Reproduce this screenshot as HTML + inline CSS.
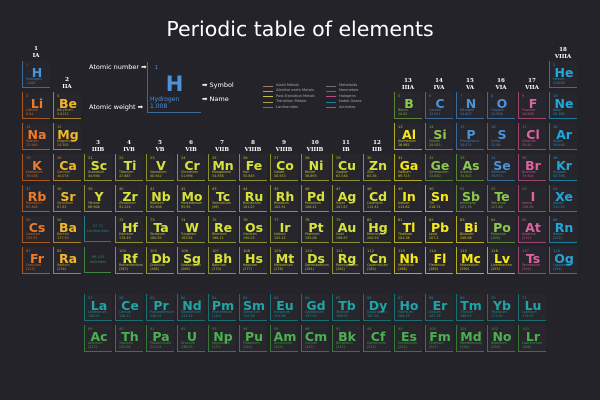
<!DOCTYPE html>
<html><head><meta charset="utf-8"><style>
*{margin:0;padding:0}
body{width:600px;height:400px;background:#232329;position:relative;overflow:hidden;font-family:"DejaVu Sans","Liberation Sans",sans-serif;color:#fff}
.t{position:absolute;left:0;width:600px;top:17px;text-align:center;font-size:20.5px;color:#fff}
.g{position:absolute;width:28px;text-align:center;font-family:"DejaVu Serif","Liberation Serif",serif;font-size:5.5px;line-height:6.5px;color:#fff;font-weight:bold}
.c{position:absolute;width:27px;height:26px;border-left:1px solid;border-bottom:1px solid;background:#26262c}
.c i{position:absolute;left:3px;top:2px;font-size:3.6px;font-style:normal;opacity:.8}
.c b{position:absolute;left:0;width:28px;top:5px;text-align:center;font-size:12.5px;line-height:14px}
.c s{position:absolute;left:3px;bottom:1px;font-size:3.3px;line-height:3.8px;text-decoration:none;opacity:.8;white-space:pre}
.a{color:#ef7a2a;border-color:#a8581e}.e{color:#f0b62c;border-color:#a8822a}.tr{color:#d8e23a;border-color:#8c9030}
.p{color:#f7e81a;border-color:#b5aa20}.m{color:#8cc84c;border-color:#5a8438}.n{color:#4e92d6;border-color:#3a6a98}
.h{color:#e0629e;border-color:#9a4470}.ng{color:#1fa8dc;border-color:#1a7aa0}.l{color:#1fa5a5;border-color:#1a7070}.x{color:#4cb050;border-color:#357838}
.ph{position:absolute;width:27px;height:26px;border-left:1px solid;border-bottom:1px solid;font-size:3.6px;text-align:center;line-height:5px;padding-top:8px;box-sizing:border-box;opacity:.7}
.lab{position:absolute;font-size:6.5px;color:#fff}
.lg{position:absolute;font-size:3.6px;color:#aaa;line-height:5.4px}
.lg div{position:relative;padding-left:13px}
.lg div span{position:absolute;left:0;top:2.5px;width:10px;height:1px}
</style></head><body>
<div class="t">Periodic table of elements</div>

<div class="g" style="left:22px;top:46px">1<br>IA</div>
<div class="g" style="left:53px;top:77px">2<br>IIA</div>
<div class="g" style="left:84px;top:140px">3<br>IIIB</div>
<div class="g" style="left:115px;top:140px">4<br>IVB</div>
<div class="g" style="left:146px;top:140px">5<br>VB</div>
<div class="g" style="left:177px;top:140px">6<br>VIB</div>
<div class="g" style="left:208px;top:140px">7<br>VIIB</div>
<div class="g" style="left:239px;top:140px">8<br>VIIIB</div>
<div class="g" style="left:270px;top:140px">9<br>VIIIB</div>
<div class="g" style="left:301px;top:140px">10<br>VIIIB</div>
<div class="g" style="left:332px;top:140px">11<br>IB</div>
<div class="g" style="left:363px;top:140px">12<br>IIB</div>
<div class="g" style="left:394px;top:78px">13<br>IIIA</div>
<div class="g" style="left:425px;top:78px">14<br>IVA</div>
<div class="g" style="left:456px;top:78px">15<br>VA</div>
<div class="g" style="left:487px;top:78px">16<br>VIA</div>
<div class="g" style="left:518px;top:78px">17<br>VIIA</div>
<div class="g" style="left:549px;top:47px">18<br>VIIIA</div>

<div style="position:absolute;left:147px;top:62px;width:53px;height:50px;border-left:1px solid #3a6a98;border-bottom:1px solid #3a6a98;color:#4e92d6">
<div style="position:absolute;left:7px;top:3px;font-size:5px">1</div>
<div style="position:absolute;left:0;width:53px;text-align:center;top:10px;font-size:21px;font-weight:bold">H</div>
<div style="position:absolute;left:2px;top:34px;font-size:6px;line-height:7px">Hydrogen<br>1.008</div>
</div>
<div class="lab" style="left:89px;top:63px">Atomic number ➡</div>
<div class="lab" style="left:89px;top:103px">Atomic weight ➡</div>
<div class="lab" style="left:202px;top:81px">➡ Symbol</div>
<div class="lab" style="left:202px;top:95px">➡ Name</div>
<div class="lg" style="left:263px;top:83px">
<div><span style="background:#a87a50"></span>Alkali Metals</div>
<div><span style="background:#c0a040"></span>Alkaline earth Metals</div>
<div><span style="background:#c8c040"></span>Post-Transition Metals</div>
<div><span style="background:#a0a050"></span>Transition Metals</div>
<div><span style="background:#2a9090"></span>Lanthanides</div>
</div>
<div class="lg" style="left:326px;top:83px">
<div><span style="background:#707070"></span>Metalloids</div>
<div><span style="background:#4a70a0"></span>Nonmetals</div>
<div><span style="background:#b05088"></span>Halogens</div>
<div><span style="background:#2080a8"></span>Noble Gases</div>
<div><span style="background:#4a8a4a"></span>Actinides</div>
</div>

<div class="c n" style="left:22px;top:61px"><i>1</i><b>H</b><s>Hydrogen
1.008</s></div>
<div class="c ng" style="left:549px;top:61px"><i>2</i><b>He</b><s>Helium
4.0026</s></div>
<div class="c a" style="left:22px;top:92px"><i>3</i><b>Li</b><s>Lithium
6.94</s></div>
<div class="c e" style="left:53px;top:92px"><i>4</i><b>Be</b><s>Beryllium
9.0122</s></div>
<div class="c m" style="left:394px;top:92px"><i>5</i><b>B</b><s>Boron
10.81</s></div>
<div class="c n" style="left:425px;top:92px"><i>6</i><b>C</b><s>Carbon
12.011</s></div>
<div class="c n" style="left:456px;top:92px"><i>7</i><b>N</b><s>Nitrogen
14.007</s></div>
<div class="c n" style="left:487px;top:92px"><i>8</i><b>O</b><s>Oxygen
15.999</s></div>
<div class="c h" style="left:518px;top:92px"><i>9</i><b>F</b><s>Fluorine
18.998</s></div>
<div class="c ng" style="left:549px;top:92px"><i>10</i><b>Ne</b><s>Neon
20.180</s></div>
<div class="c a" style="left:22px;top:123px"><i>11</i><b>Na</b><s>Sodium
22.990</s></div>
<div class="c e" style="left:53px;top:123px"><i>12</i><b>Mg</b><s>Magnesium
24.305</s></div>
<div class="c p" style="left:394px;top:123px"><i>13</i><b>Al</b><s>Aluminium
26.982</s></div>
<div class="c m" style="left:425px;top:123px"><i>14</i><b>Si</b><s>Silicon
28.085</s></div>
<div class="c n" style="left:456px;top:123px"><i>15</i><b>P</b><s>Phosphorus
30.974</s></div>
<div class="c n" style="left:487px;top:123px"><i>16</i><b>S</b><s>Sulfur
32.06</s></div>
<div class="c h" style="left:518px;top:123px"><i>17</i><b>Cl</b><s>Chlorine
35.45</s></div>
<div class="c ng" style="left:549px;top:123px"><i>18</i><b>Ar</b><s>Argon
39.948</s></div>
<div class="c a" style="left:22px;top:154px"><i>19</i><b>K</b><s>Potassium
39.098</s></div>
<div class="c e" style="left:53px;top:154px"><i>20</i><b>Ca</b><s>Calcium
40.078</s></div>
<div class="c tr" style="left:84px;top:154px"><i>21</i><b>Sc</b><s>Scandium
44.956</s></div>
<div class="c tr" style="left:115px;top:154px"><i>22</i><b>Ti</b><s>Titanium
47.867</s></div>
<div class="c tr" style="left:146px;top:154px"><i>23</i><b>V</b><s>Vanadium
50.942</s></div>
<div class="c tr" style="left:177px;top:154px"><i>24</i><b>Cr</b><s>Chromium
51.996</s></div>
<div class="c tr" style="left:208px;top:154px"><i>25</i><b>Mn</b><s>Manganese
54.938</s></div>
<div class="c tr" style="left:239px;top:154px"><i>26</i><b>Fe</b><s>Iron
55.845</s></div>
<div class="c tr" style="left:270px;top:154px"><i>27</i><b>Co</b><s>Cobalt
58.933</s></div>
<div class="c tr" style="left:301px;top:154px"><i>28</i><b>Ni</b><s>Nickel
58.693</s></div>
<div class="c tr" style="left:332px;top:154px"><i>29</i><b>Cu</b><s>Copper
63.546</s></div>
<div class="c tr" style="left:363px;top:154px"><i>30</i><b>Zn</b><s>Zinc
65.38</s></div>
<div class="c p" style="left:394px;top:154px"><i>31</i><b>Ga</b><s>Gallium
69.723</s></div>
<div class="c m" style="left:425px;top:154px"><i>32</i><b>Ge</b><s>Germanium
72.630</s></div>
<div class="c m" style="left:456px;top:154px"><i>33</i><b>As</b><s>Arsenic
74.922</s></div>
<div class="c n" style="left:487px;top:154px"><i>34</i><b>Se</b><s>Selenium
78.971</s></div>
<div class="c h" style="left:518px;top:154px"><i>35</i><b>Br</b><s>Bromine
79.904</s></div>
<div class="c ng" style="left:549px;top:154px"><i>36</i><b>Kr</b><s>Krypton
83.798</s></div>
<div class="c a" style="left:22px;top:185px"><i>37</i><b>Rb</b><s>Rubidium
85.468</s></div>
<div class="c e" style="left:53px;top:185px"><i>38</i><b>Sr</b><s>Strontium
87.62</s></div>
<div class="c tr" style="left:84px;top:185px"><i>39</i><b>Y</b><s>Yttrium
88.906</s></div>
<div class="c tr" style="left:115px;top:185px"><i>40</i><b>Zr</b><s>Zirconium
91.224</s></div>
<div class="c tr" style="left:146px;top:185px"><i>41</i><b>Nb</b><s>Niobium
92.906</s></div>
<div class="c tr" style="left:177px;top:185px"><i>42</i><b>Mo</b><s>Molybdenum
95.95</s></div>
<div class="c tr" style="left:208px;top:185px"><i>43</i><b>Tc</b><s>Technetium
(98)</s></div>
<div class="c tr" style="left:239px;top:185px"><i>44</i><b>Ru</b><s>Ruthenium
101.07</s></div>
<div class="c tr" style="left:270px;top:185px"><i>45</i><b>Rh</b><s>Rhodium
102.91</s></div>
<div class="c tr" style="left:301px;top:185px"><i>46</i><b>Pd</b><s>Palladium
106.42</s></div>
<div class="c tr" style="left:332px;top:185px"><i>47</i><b>Ag</b><s>Silver
107.87</s></div>
<div class="c tr" style="left:363px;top:185px"><i>48</i><b>Cd</b><s>Cadmium
112.41</s></div>
<div class="c p" style="left:394px;top:185px"><i>49</i><b>In</b><s>Indium
114.82</s></div>
<div class="c p" style="left:425px;top:185px"><i>50</i><b>Sn</b><s>Tin
118.71</s></div>
<div class="c m" style="left:456px;top:185px"><i>51</i><b>Sb</b><s>Antimony
121.76</s></div>
<div class="c m" style="left:487px;top:185px"><i>52</i><b>Te</b><s>Tellurium
127.60</s></div>
<div class="c h" style="left:518px;top:185px"><i>53</i><b>I</b><s>Iodine
126.90</s></div>
<div class="c ng" style="left:549px;top:185px"><i>54</i><b>Xe</b><s>Xenon
131.29</s></div>
<div class="c a" style="left:22px;top:216px"><i>55</i><b>Cs</b><s>Caesium
132.91</s></div>
<div class="c e" style="left:53px;top:216px"><i>56</i><b>Ba</b><s>Barium
137.33</s></div>
<div class="ph l" style="left:84px;top:216px">57-71<br>Lanthanides</div>
<div class="c tr" style="left:115px;top:216px"><i>72</i><b>Hf</b><s>Hafnium
178.49</s></div>
<div class="c tr" style="left:146px;top:216px"><i>73</i><b>Ta</b><s>Tantalum
180.95</s></div>
<div class="c tr" style="left:177px;top:216px"><i>74</i><b>W</b><s>Tungsten
183.84</s></div>
<div class="c tr" style="left:208px;top:216px"><i>75</i><b>Re</b><s>Rhenium
186.21</s></div>
<div class="c tr" style="left:239px;top:216px"><i>76</i><b>Os</b><s>Osmium
190.23</s></div>
<div class="c tr" style="left:270px;top:216px"><i>77</i><b>Ir</b><s>Iridium
192.22</s></div>
<div class="c tr" style="left:301px;top:216px"><i>78</i><b>Pt</b><s>Platinum
195.08</s></div>
<div class="c tr" style="left:332px;top:216px"><i>79</i><b>Au</b><s>Gold
196.97</s></div>
<div class="c tr" style="left:363px;top:216px"><i>80</i><b>Hg</b><s>Mercury
200.59</s></div>
<div class="c p" style="left:394px;top:216px"><i>81</i><b>Tl</b><s>Thallium
204.38</s></div>
<div class="c p" style="left:425px;top:216px"><i>82</i><b>Pb</b><s>Lead
207.2</s></div>
<div class="c p" style="left:456px;top:216px"><i>83</i><b>Bi</b><s>Bismuth
208.98</s></div>
<div class="c m" style="left:487px;top:216px"><i>84</i><b>Po</b><s>Polonium
(209)</s></div>
<div class="c h" style="left:518px;top:216px"><i>85</i><b>At</b><s>Astatine
(210)</s></div>
<div class="c ng" style="left:549px;top:216px"><i>86</i><b>Rn</b><s>Radon
(222)</s></div>
<div class="c a" style="left:22px;top:247px"><i>87</i><b>Fr</b><s>Francium
(223)</s></div>
<div class="c e" style="left:53px;top:247px"><i>88</i><b>Ra</b><s>Radium
(226)</s></div>
<div class="ph x" style="left:84px;top:247px">89-103<br>Actinides</div>
<div class="c tr" style="left:115px;top:247px"><i>104</i><b>Rf</b><s>Rutherfordium
(267)</s></div>
<div class="c tr" style="left:146px;top:247px"><i>105</i><b>Db</b><s>Dubnium
(268)</s></div>
<div class="c tr" style="left:177px;top:247px"><i>106</i><b>Sg</b><s>Seaborgium
(269)</s></div>
<div class="c tr" style="left:208px;top:247px"><i>107</i><b>Bh</b><s>Bohrium
(270)</s></div>
<div class="c tr" style="left:239px;top:247px"><i>108</i><b>Hs</b><s>Hassium
(277)</s></div>
<div class="c tr" style="left:270px;top:247px"><i>109</i><b>Mt</b><s>Meitnerium
(278)</s></div>
<div class="c tr" style="left:301px;top:247px"><i>110</i><b>Ds</b><s>Darmstadtium
(281)</s></div>
<div class="c tr" style="left:332px;top:247px"><i>111</i><b>Rg</b><s>Roentgenium
(282)</s></div>
<div class="c tr" style="left:363px;top:247px"><i>112</i><b>Cn</b><s>Copernicium
(285)</s></div>
<div class="c p" style="left:394px;top:247px"><i>113</i><b>Nh</b><s>Nihonium
(286)</s></div>
<div class="c p" style="left:425px;top:247px"><i>114</i><b>Fl</b><s>Flerovium
(289)</s></div>
<div class="c p" style="left:456px;top:247px"><i>115</i><b>Mc</b><s>Moscovium
(290)</s></div>
<div class="c p" style="left:487px;top:247px"><i>116</i><b>Lv</b><s>Livermorium
(293)</s></div>
<div class="c h" style="left:518px;top:247px"><i>117</i><b>Ts</b><s>Tennessine
(294)</s></div>
<div class="c ng" style="left:549px;top:247px"><i>118</i><b>Og</b><s>Oganesson
(294)</s></div>
<div class="c l" style="left:84px;top:294px"><i>57</i><b>La</b><s>Lanthanum
138.91</s></div>
<div class="c l" style="left:115px;top:294px"><i>58</i><b>Ce</b><s>Cerium
140.12</s></div>
<div class="c l" style="left:146px;top:294px"><i>59</i><b>Pr</b><s>Praseodymium
140.91</s></div>
<div class="c l" style="left:177px;top:294px"><i>60</i><b>Nd</b><s>Neodymium
144.24</s></div>
<div class="c l" style="left:208px;top:294px"><i>61</i><b>Pm</b><s>Promethium
(145)</s></div>
<div class="c l" style="left:239px;top:294px"><i>62</i><b>Sm</b><s>Samarium
150.36</s></div>
<div class="c l" style="left:270px;top:294px"><i>63</i><b>Eu</b><s>Europium
151.96</s></div>
<div class="c l" style="left:301px;top:294px"><i>64</i><b>Gd</b><s>Gadolinium
157.25</s></div>
<div class="c l" style="left:332px;top:294px"><i>65</i><b>Tb</b><s>Terbium
158.93</s></div>
<div class="c l" style="left:363px;top:294px"><i>66</i><b>Dy</b><s>Dysprosium
162.50</s></div>
<div class="c l" style="left:394px;top:294px"><i>67</i><b>Ho</b><s>Holmium
164.93</s></div>
<div class="c l" style="left:425px;top:294px"><i>68</i><b>Er</b><s>Erbium
167.26</s></div>
<div class="c l" style="left:456px;top:294px"><i>69</i><b>Tm</b><s>Thulium
168.93</s></div>
<div class="c l" style="left:487px;top:294px"><i>70</i><b>Yb</b><s>Ytterbium
173.05</s></div>
<div class="c l" style="left:518px;top:294px"><i>71</i><b>Lu</b><s>Lutetium
174.97</s></div>
<div class="c x" style="left:84px;top:325px"><i>89</i><b>Ac</b><s>Actinium
(227)</s></div>
<div class="c x" style="left:115px;top:325px"><i>90</i><b>Th</b><s>Thorium
232.04</s></div>
<div class="c x" style="left:146px;top:325px"><i>91</i><b>Pa</b><s>Protactinium
231.04</s></div>
<div class="c x" style="left:177px;top:325px"><i>92</i><b>U</b><s>Uranium
238.03</s></div>
<div class="c x" style="left:208px;top:325px"><i>93</i><b>Np</b><s>Neptunium
(237)</s></div>
<div class="c x" style="left:239px;top:325px"><i>94</i><b>Pu</b><s>Plutonium
(244)</s></div>
<div class="c x" style="left:270px;top:325px"><i>95</i><b>Am</b><s>Americium
(243)</s></div>
<div class="c x" style="left:301px;top:325px"><i>96</i><b>Cm</b><s>Curium
(247)</s></div>
<div class="c x" style="left:332px;top:325px"><i>97</i><b>Bk</b><s>Berkelium
(247)</s></div>
<div class="c x" style="left:363px;top:325px"><i>98</i><b>Cf</b><s>Californium
(251)</s></div>
<div class="c x" style="left:394px;top:325px"><i>99</i><b>Es</b><s>Einsteinium
(252)</s></div>
<div class="c x" style="left:425px;top:325px"><i>100</i><b>Fm</b><s>Fermium
(257)</s></div>
<div class="c x" style="left:456px;top:325px"><i>101</i><b>Md</b><s>Mendelevium
(258)</s></div>
<div class="c x" style="left:487px;top:325px"><i>102</i><b>No</b><s>Nobelium
(259)</s></div>
<div class="c x" style="left:518px;top:325px"><i>103</i><b>Lr</b><s>Lawrencium
(266)</s></div>
</body></html>
